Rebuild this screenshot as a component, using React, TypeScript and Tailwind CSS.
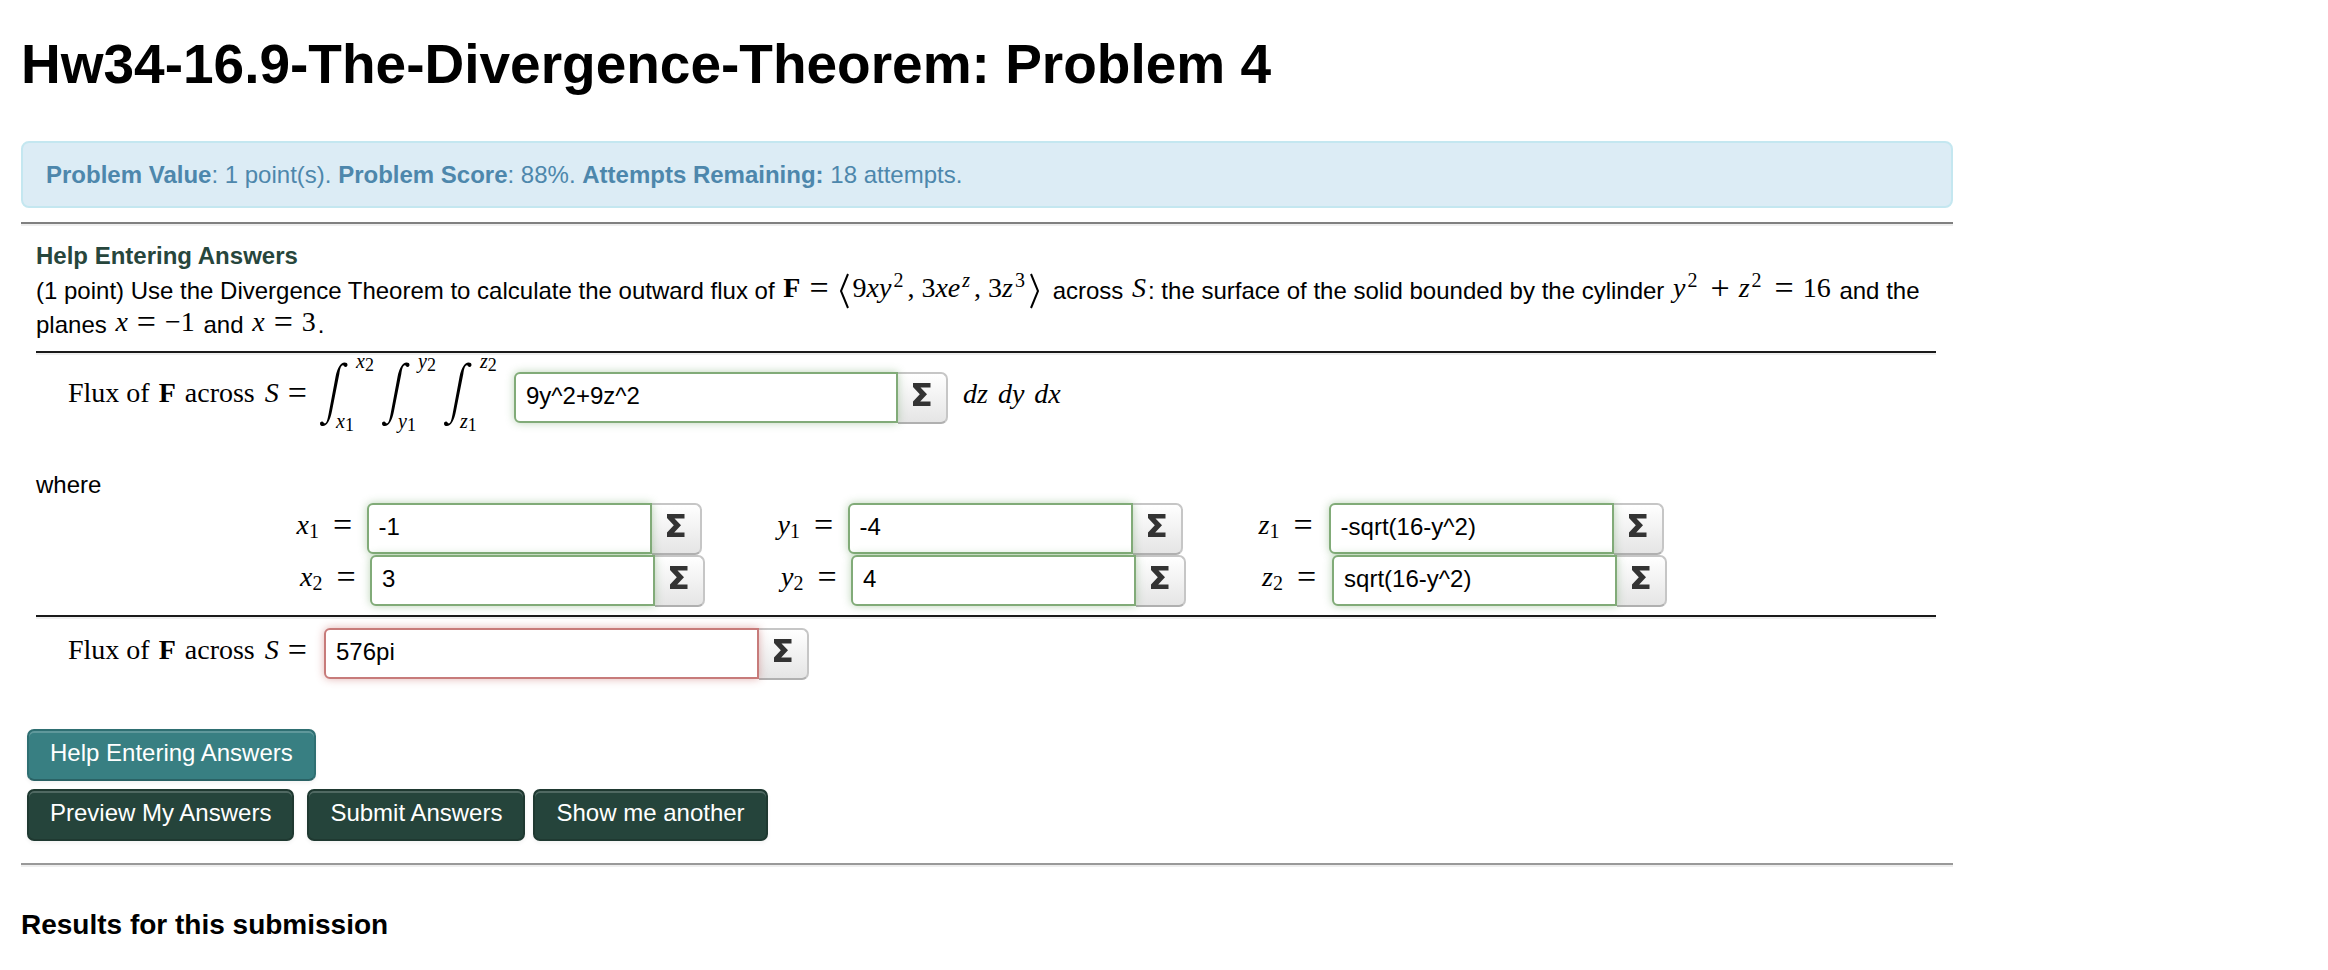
import type { ReactNode } from "react";

const attempts = [
  { label: "Problem Value", rest: ": 1 point(s). " },
  { label: "Problem Score", rest: ": 88%. " },
  { label: "Attempts Remaining:", rest: " 18 attempts." },
];

const bounds = [
  [
    { v: "x", n: "1", value: "-1" },
    { v: "y", n: "1", value: "-4" },
    { v: "z", n: "1", value: "-sqrt(16-y^2)" },
  ],
  [
    { v: "x", n: "2", value: "3" },
    { v: "y", n: "2", value: "4" },
    { v: "z", n: "2", value: "sqrt(16-y^2)" },
  ],
];

// Zero line height keeps tall math from stretching the paragraph's lines
function Math({ children }: { children: ReactNode }) {
  return (
    <span className="mx-[2px] align-[2px] font-['Liberation_Serif',serif] text-[28px] leading-0 whitespace-nowrap">
      {children}
    </span>
  );
}

function Op({ children }: { children: ReactNode }) {
  return <span className="mx-[9px] align-[-2px] text-[34px] leading-0">{children}</span>;
}

function Sup({ children }: { children: ReactNode }) {
  return <sup className="-top-[10px] pr-1 pl-[2px] text-[20px]">{children}</sup>;
}

function Sub({ children }: { children: ReactNode }) {
  return <sub className="relative top-1 bottom-0 text-[20px] not-italic">{children}</sub>;
}

function Bracket({ d }: { d: string }) {
  return (
    <svg viewBox="0 0 12 36" className="-my-2 mr-[3px] inline-block h-9 w-3 align-middle" aria-hidden="true">
      <path d={d} fill="none" stroke="#000" strokeWidth="2" />
    </svg>
  );
}

function Integral({ v }: { v: string }) {
  return (
    <span className="flex h-[76px] w-[62px]">
      <svg viewBox="0 0 28 66" className="mt-[6px] h-[66px] w-7 shrink-0" aria-hidden="true">
        <path d="M27.5 3.8C27.5 5.2 26.600 6 25.500 6 24 6 24 4.300 22.800 4.300 21 4.300 20 8 19.300 13L12 50C10.300 59 7 65 2.800 65 1.200 65 0 64.200 0 62.700 0 61.400.9 60.600 2 60.600c1.500 0 1.600 1.800 2.800 1.800 1.800 0 2.700-3.900 3.700-8.900L15.500 16C17.200 7 20.500 1.500 24.600 1.500c1.700 0 2.900.9 2.900 2.300z" />
      </svg>
      <span className="-mt-1 flex flex-col justify-between text-[20px] leading-5 italic">
        <span className="pl-2">
          {v}
          <sub className="relative top-[3px] bottom-0 text-[18px] not-italic">2</sub>
        </span>
        <span className="-ml-3">
          {v}
          <sub className="relative top-[3px] bottom-0 text-[18px] not-italic">1</sub>
        </span>
      </span>
    </span>
  );
}

type FieldProps = { id: string; value: string; width: string; wrong?: boolean };

function AnswerField({ id, value, width, wrong }: FieldProps) {
  const tone = wrong
    ? "border-[#c77b7a] shadow-[0_0_8px_rgba(191,84,83,0.45)]"
    : "border-[#81ab78] shadow-[0_0_8px_rgba(104,160,95,0.45)]";
  return (
    <span className="flex h-[52px]">
      <input
        id={id}
        defaultValue={value}
        className={`relative h-[51px] rounded-l-[6px] border-2 bg-white px-[10px] pb-1 font-['Liberation_Sans',sans-serif] text-2xl text-black outline-none ${width} ${tone}`}
      />
      <button
        type="button"
        aria-label="Open equation editor"
        className="flex h-[52px] w-[50px] justify-center rounded-r-[7px] border-2 border-l-0 border-[#c6c6c6] border-b-[#b0b0b0] bg-linear-to-b from-white to-[#e5e5e5] pt-[9px]"
      >
        <svg viewBox="0 0 18 23" className="h-[23px] w-[18px]" fill="#333" aria-hidden="true">
          <path d="M0 0h17.500v4.500H7.500l6.500 6.800-6.800 7.200h10.300V23H0v-4.500l6.800-7.200L0 4z" />
        </svg>
      </button>
    </span>
  );
}

function FluxLabel({ htmlFor }: { htmlFor: string }) {
  return (
    <label htmlFor={htmlFor} className="flex w-[252px] shrink-0 gap-[9px] whitespace-nowrap">
      <span>Flux of</span>
      <b>F</b>
      <span>across</span>
      <i className="pl-px">S</i>
      <span className="text-[34px]">=</span>
    </label>
  );
}

function Rule() {
  return <hr className="h-1 border-0 border-t-2 border-[#1a1a1a] bg-[#eee]" />;
}

const button =
  "h-[52px] rounded-[7px] border-2 px-[21px] pb-1 text-2xl leading-[30px] text-white shadow-[inset_0_2px_0_rgba(255,255,255,0.2),0_2px_4px_rgba(0,0,0,0.05)]";
const darkButton = "border-[#1f3931] bg-[#25443b]";

export default function App() {
  return (
    <main className="min-h-screen bg-white font-['Liberation_Sans',sans-serif] text-2xl text-black">
      <div className="ml-[21px] w-[83%]">
        <h1 className="pt-8 text-[55px] leading-16 font-bold">
          Hw34-16.9-The-Divergence-Theorem: Problem 4
        </h1>

        {/* Score banner */}
        <p className="mt-[45px] rounded-[8px] border-2 border-[#c4e7f0] bg-[#dcecf5] px-[23px] py-4 leading-[31px] text-[#4d87ac]">
          {attempts.map((a) => (
            <span key={a.label}>
              <b>{a.label}</b>
              {a.rest}
            </span>
          ))}
        </p>
        <hr className="mt-[14px] h-1 border-0 border-t-2 border-[#808080] bg-[#eee]" />

        {/* Problem statement */}
        <section className="pr-[17px] pl-[15px]">
          <a href="#help" className="mt-[14px] block leading-8 font-bold text-[#27463c]">
            Help Entering Answers
          </a>
          <p className="pt-[2px] leading-[34px]">
            (1 point) Use the Divergence Theorem to calculate the outward flux of{" "}
            <Math>
              <b>F</b>
              <Op>=</Op>
              <Bracket d="M10 1 3 18l7 17" />9<i>xy</i>
              <Sup>2</Sup>, 3<i>xe</i>
              <Sup>
                <i>z</i>
              </Sup>
              , 3<i>z</i>
              <Sup>3</Sup>
              <Bracket d="M2 1l7 17-7 17" />
            </Math>{" "}
            across{" "}
            <Math>
              <i>S</i>
            </Math>
            : the surface of the solid bounded by the cylinder{" "}
            <Math>
              <i>y</i>
              <Sup>2</Sup>
              <Op>+</Op>
              <i>z</i>
              <Sup>2</Sup>
              <Op>=</Op>16
            </Math>{" "}
            and the{" "}
            planes{" "}
            <Math>
              <i>x</i>
              <Op>=</Op>−1
            </Math>{" "}
            and{" "}
            <Math>
              <i>x</i>
              <Op>=</Op>3
            </Math>
            .
          </p>
          <div className="mt-[9px]">
            <Rule />
          </div>

          {/* Integral */}
          <div className="flex h-[76px] pl-8 font-['Liberation_Serif',serif] text-[28px] leading-[76px]">
            <FluxLabel htmlFor="integrand" />
            <Integral v="x" />
            <Integral v="y" />
            <Integral v="z" />
            <div className="mt-[17px] ml-2 flex leading-[44px]">
              <AnswerField id="integrand" value="9y^2+9z^2" width="w-[384px]" />
              <i className="flex gap-[10px] pl-[15px]">
                <span>dz</span>
                <span>dy</span>
                <span>dx</span>
              </i>
            </div>
          </div>

          <p className="mt-[35px] leading-[37px]">where</p>
          <div className="flex flex-col items-center pr-3">
            {bounds.map((row, i) => (
              <div key={i} className={i === 0 ? "flex gap-[76px]" : "flex gap-[76px] pl-[7px]"}>
                {row.map((b) => (
                  <div key={b.v} className="flex">
                    <label
                      htmlFor={b.v + b.n}
                      className="flex w-[70px] gap-[14px] font-['Liberation_Serif',serif] text-[28px] leading-[44px] italic"
                    >
                      <span>
                        {b.v}
                        <Sub>{b.n}</Sub>
                      </span>
                      <span className="text-[34px] not-italic">=</span>
                    </label>
                    <AnswerField id={b.v + b.n} value={b.value} width="w-[285px]" />
                  </div>
                ))}
              </div>
            ))}
          </div>
          <div className="mt-2">
            <Rule />
          </div>

          <div className="mt-[9px] flex pl-8 font-['Liberation_Serif',serif] text-[28px] leading-[44px]">
            <FluxLabel htmlFor="flux" />
            <div className="ml-1">
              <AnswerField id="flux" value="576pi" width="w-[435px]" wrong />
            </div>
          </div>
        </section>

        {/* Actions */}
        <div className="mt-[49px] pl-[6px]">
          <button type="button" className={`${button} border-[#2f6f72] border-b-[#2a6265] bg-[#387f82]`}>
            Help Entering Answers
          </button>
          <div className="mt-2 flex">
            <button type="button" className={`${button} ${darkButton}`}>
              Preview My Answers
            </button>
            <button type="submit" className={`${button} ${darkButton} ml-[13px]`}>
              Submit Answers
            </button>
            <button type="submit" className={`${button} ${darkButton} ml-2`}>
              Show me another
            </button>
          </div>
        </div>
        <hr className="mt-[22px] h-1 border-0 border-t-2 border-[#999] bg-[#eee]" />

        <h2 className="mt-[38px] text-[28px] leading-10 font-bold">Results for this submission</h2>
      </div>
    </main>
  );
}
